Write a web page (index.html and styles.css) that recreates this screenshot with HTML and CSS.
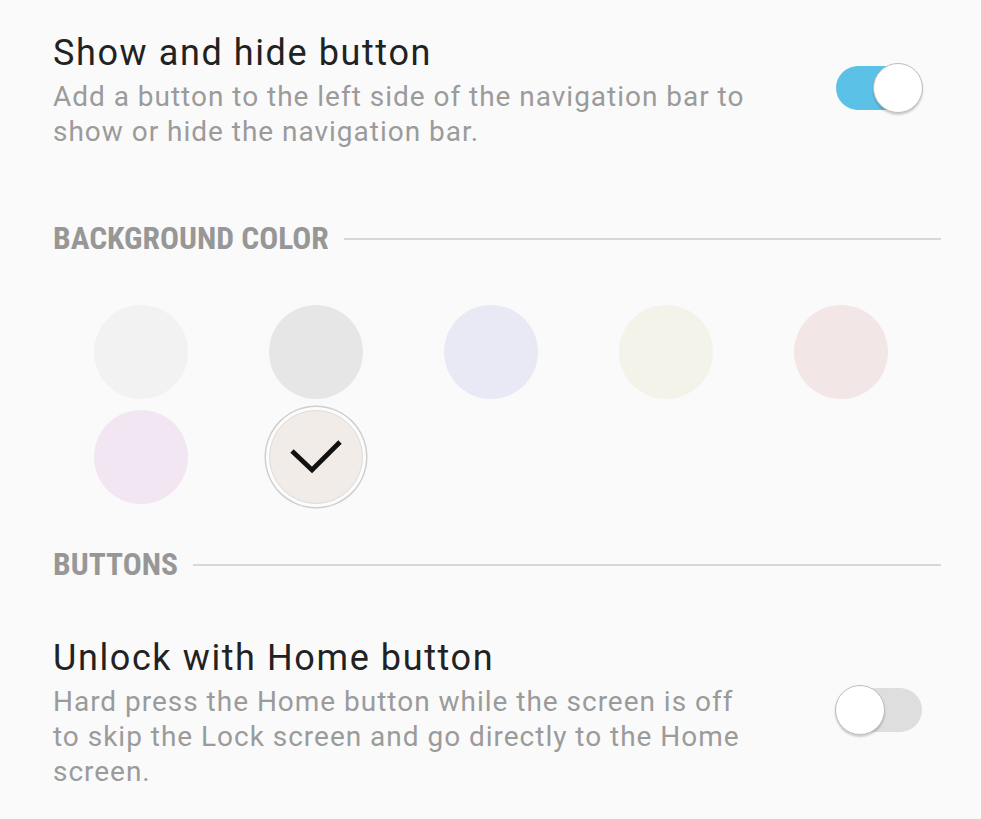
FILE: index.html
```html
<!DOCTYPE html>
<html lang="en">
<head>
  <meta charset="UTF-8">
  <meta name="viewport" content="width=device-width, initial-scale=1.0">
  <title>Navigation bar</title>
  <link rel="stylesheet" href="styles.css">
</head>
<body>
  <div class="setting first">
    <div class="text">
      <h2>Show and hide button</h2>
      <p>Add a button to the left side of the navigation bar to show or hide the navigation bar.</p>
    </div>
    <div class="switch on"><span class="thumb"></span></div>
  </div>

  <div class="group-title bg-title">
    <span>BACKGROUND COLOR</span>
  </div>

  <div class="colors">
    <div class="swatch" style="background:#f2f2f2"></div>
    <div class="swatch" style="background:#e6e6e6"></div>
    <div class="swatch" style="background:#e9e9f5"></div>
    <div class="swatch" style="background:#f3f3ea"></div>
    <div class="swatch" style="background:#f2e6e6"></div>
    <div class="swatch" style="background:#f1e6f1"></div>
    <div class="swatch selected" style="background:#f1ece8">
      <svg width="60" height="40" viewBox="0 0 60 40">
        <polyline points="6,14 26,33 54,5" fill="none" stroke="#111" stroke-width="4.8"/>
      </svg>
    </div>
  </div>

  <div class="group-title btn-title">
    <span>BUTTONS</span>
  </div>

  <div class="setting">
    <div class="text">
      <h2>Unlock with Home button</h2>
      <p>Hard press the Home button while the screen is off to skip the Lock screen and go directly to the Home screen.</p>
    </div>
    <div class="switch"><span class="thumb"></span></div>
  </div>
</body>
</html>
```

FILE: styles.css
```css
body {
  margin: 0;
  background: #fafafa;
  font-family: Roboto, "Noto Sans", sans-serif;
  color: #222;
}
.setting {
  display: flex;
  align-items: center;
  justify-content: space-between;
  padding: 0 59px 0 53px;
}
.setting.first {
  padding-top: 31px;
}
.text {
  max-width: 702px;
}
.text h2 {
  margin: 0 0 4px;
  font-size: 36px;
  font-weight: 400;
  line-height: 44px;
  letter-spacing: 1.6px;
  white-space: nowrap;
  color: #222;
}
.text p {
  margin: 0;
  font-size: 28px;
  line-height: 35px;
  letter-spacing: 0.98px;
  color: #9b9b9b;
}
.switch {
  position: relative;
  width: 86px;
  height: 44px;
  margin-bottom: 5px;
  border-radius: 22px;
  background: #dedede;
  flex-shrink: 0;
}
.switch.on {
  background: #5bc1e6;
}
.thumb {
  position: absolute;
  top: -3px;
  left: -1px;
  width: 48px;
  height: 48px;
  border-radius: 50%;
  background: #fff;
  border: 1px solid #bdbdbd;
  box-shadow: 0 2px 2px rgba(0,0,0,0.18);
}
.switch.on .thumb {
  left: auto;
  right: -1px;
}
.group-title {
  display: flex;
  align-items: center;
  gap: 15px;
  padding: 0 40px 0 53px;
  font-family: "Roboto Condensed", Roboto, sans-serif;
  font-stretch: condensed;
  font-weight: 700;
  font-size: 31.5px;
  line-height: 36px;
  color: #979797;
}
.group-title::after {
  content: "";
  flex: 1;
  height: 2px;
  background: #d7d7d7;
}
.bg-title {
  margin-top: 72px;
}
.btn-title {
  margin-top: 43px;
  margin-bottom: 53px;
}
.colors {
  display: grid;
  grid-template-columns: repeat(5, 1fr);
  row-gap: 11px;
  width: 876px;
  margin: 48px 0 0 53px;
}
.swatch {
  justify-self: center;
  width: 94px;
  height: 94px;
  border-radius: 50%;
  box-sizing: border-box;
  display: flex;
  align-items: center;
  justify-content: center;
}
.swatch.selected {
  border: 1px solid #dcdcdc;
  box-shadow: 0 0 0 3px #fcfcfc, 0 0 0 4.5px #cfcfcf;
}
```
